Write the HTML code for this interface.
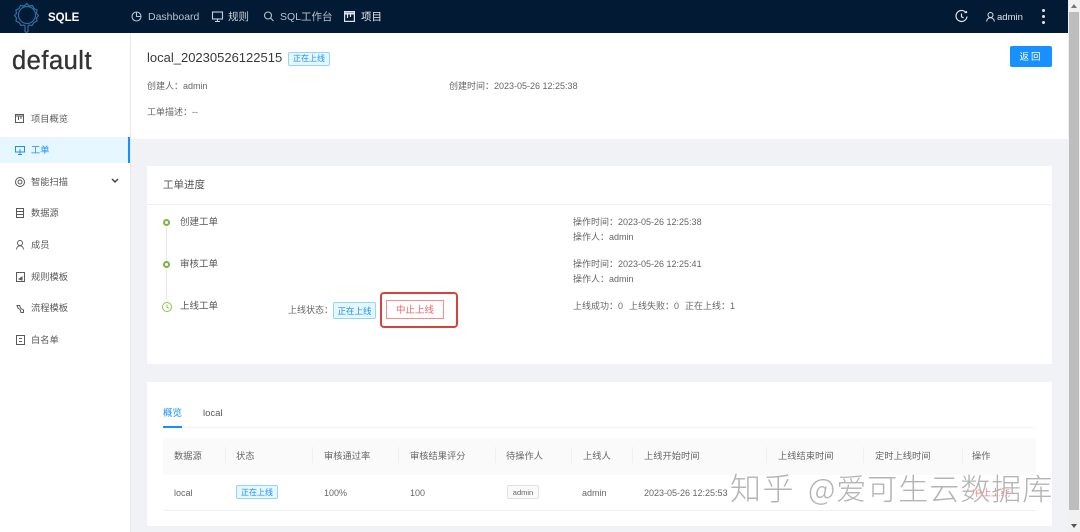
<!DOCTYPE html>
<html><head><meta charset="utf-8"><style>
*{box-sizing:border-box}
html,body{margin:0;padding:0;width:1080px;height:532px;overflow:hidden;background:#f0f2f5;font-family:"Liberation Sans","Noto Sans CJK SC",sans-serif;color:#595959}
#w{position:absolute;left:0;top:0;width:1080px;height:532px;filter:blur(.3px)}
.a{position:absolute;white-space:nowrap;line-height:1;transform:translateY(1px)}
.box{position:absolute}
.s{font-size:9.5px}
.m{font-size:9px;color:#666}
.tag{position:absolute;background:#e6f7ff;border:1px solid #91d5ff;color:#1890ff;font-size:8.5px;text-align:center;border-radius:2px}
svg{position:absolute;overflow:visible}
.th{font-size:9.25px;color:#666;top:451px}
.sep{position:absolute;width:1px;height:16px;top:447px;background:#f0f0f0}
.nav{font-size:10.5px;color:#b8c2cc;top:11px}
.side{font-size:9.25px;color:#595959;left:31px}
</style></head><body><div id="w">
<div class="box" style="left:0;top:0;width:1080px;height:33px;background:#021a33"></div>
<svg style="left:13px;top:2px" width="28" height="30" fill="none" stroke="#2f6f9f" stroke-width="1.2"><circle cx="14" cy="13" r="8.5"/><path d="M14 1.5l2 2.5 3.5-.5 1.5 3 3 1.500-.5 3.500 2 2-2 2.500.5 3-3 1.500-2 3-3-.5-1 1v5.500l-1.500 1-1.500-1v-5.500l-1-1-3 .5-2-3-3-1.500.5-3-2-2.500 2-2-.5-3.500 3-1.500 1.500-3 3.500.5z"/></svg>
<div class="a" style="left:48px;top:12px;font-size:11.5px;font-weight:bold;color:#fff">SQLE</div>
<svg style="left:131px;top:11px" width="11" height="11" fill="none" stroke="#b8c2cc" stroke-width="1.1"><circle cx="5.5" cy="5.5" r="4.5"/><path d="M5.500 1v4.500h4.500"/></svg>
<div class="a nav" style="left:148px">Dashboard</div>
<svg style="left:212px;top:11px" width="11" height="11" fill="none" stroke="#c8d0d8" stroke-width="1.1"><rect x=".5" y="1" width="10" height="7"/><path d="M3 10.500h5M5.500 8v2.500"/></svg>
<div class="a nav" style="left:228px;color:#c8d0d8">规则</div>
<svg style="left:264px;top:11px" width="10" height="11" fill="none" stroke="#b8c2cc" stroke-width="1.1"><circle cx="4" cy="4.5" r="3.5"/><path d="M6.500 7l3 3"/></svg>
<div class="a nav" style="left:280px">SQL工作台</div>
<svg style="left:344px;top:11px" width="11" height="11" fill="none" stroke="#dde3e8" stroke-width="1.2"><rect x=".6" y=".6" width="9.8" height="9.8"/><path d="M.6 2.500h9.800" stroke-width="2"/><path d="M3.500 3v4M6.500 3v3"/></svg>
<div class="a nav" style="left:361px;color:#e6eaee">项目</div>
<svg style="left:955px;top:10px" width="13" height="13" fill="none" stroke="#e0e4e8" stroke-width="1.2"><path d="M10.800 2.500A5.500 5.500 0 1 0 12 6.500"/><path d="M6.500 3.500v3.300l2 1M9.500 2.500h2v-1.500"/></svg>
<svg style="left:986px;top:12px" width="9" height="10" fill="none" stroke="#dde3e8" stroke-width="1"><circle cx="4.5" cy="3" r="2.5"/><path d="M.6 9.500c.5-5 7.300-5 7.800 0"/></svg>
<div class="a" style="left:997px;top:12px;font-size:9.5px;color:#dde3e8">admin</div>
<div class="box" style="left:1042px;top:9px;width:3px;height:3px;border-radius:50%;background:#e0e4e8"></div>
<div class="box" style="left:1042px;top:15px;width:3px;height:3px;border-radius:50%;background:#e0e4e8"></div>
<div class="box" style="left:1042px;top:21px;width:3px;height:3px;border-radius:50%;background:#e0e4e8"></div>

<div class="box" style="left:0;top:33px;width:131px;height:499px;background:#fff;border-right:1px solid #e8e8e8"></div>
<div class="a" style="left:12px;top:48px;font-size:25.5px;color:#333;letter-spacing:.5px;-webkit-text-stroke:.35px #333">default</div>
<div class="box" style="left:0;top:137px;width:130px;height:26px;background:#e6f7ff"></div>
<div class="box" style="left:128px;top:137px;width:2px;height:26px;background:#1890ff"></div>
<svg style="left:15px;top:114px" width="9" height="9" fill="none" stroke="#595959"><rect x=".5" y=".5" width="8" height="8"/><path d="M.5 2h8M3.500 2v4M6 2v3"/></svg>
<div class="a side" style="top:114px">项目概览</div>
<svg style="left:15px;top:146px" width="10" height="9" fill="none" stroke="#1890ff"><rect x=".5" y=".5" width="9" height="5.5"/><path d="M5 3v5M3 8.500h4"/></svg>
<div class="a side" style="top:145px;color:#1890ff">工单</div>
<svg style="left:15px;top:177px" width="10" height="10" fill="none" stroke="#595959"><circle cx="5" cy="5" r="4.5"/><circle cx="5" cy="5" r="2"/></svg>
<div class="a side" style="top:177px">智能扫描</div>
<svg style="left:111px;top:178px" width="8" height="6" fill="none" stroke="#444" stroke-width="1.5"><path d="M1 1l3 3 3-3"/></svg>
<svg style="left:16px;top:208px" width="8" height="10" fill="none" stroke="#595959"><rect x=".5" y=".5" width="7" height="9"/><path d="M.5 3.500h7M.5 6.500h7"/></svg>
<div class="a side" style="top:208px">数据源</div>
<svg style="left:16px;top:240px" width="8" height="10" fill="none" stroke="#595959"><circle cx="4" cy="3" r="2.5"/><path d="M.5 9.500c.3-5 6.700-5 7 0"/></svg>
<div class="a side" style="top:240px">成员</div>
<svg style="left:16px;top:272px" width="9" height="10" fill="none" stroke="#595959"><rect x=".5" y=".5" width="8" height="9"/><path d="M3 7l3-2v3z" fill="#595959"/></svg>
<div class="a side" style="top:272px">规则模板</div>
<svg style="left:16px;top:304px" width="9" height="9" fill="none" stroke="#595959"><path d="M1 1.500h2.500l1.500 3 2.500 1.500v2.500h-2.500l-1-3-2-1.500z"/></svg>
<div class="a side" style="top:303px">流程模板</div>
<svg style="left:16px;top:335px" width="9" height="10" fill="none" stroke="#595959"><rect x=".5" y=".5" width="8" height="9"/><path d="M3 3.500h3M3 6.500h3"/></svg>
<div class="a side" style="top:335px">白名单</div>

<div class="box" style="left:131px;top:33px;width:937px;height:106px;background:#fff"></div>
<div class="a" style="left:147px;top:50px;font-size:13px;color:#3a3a3a">local_20230526122515</div>
<div class="tag" style="left:288px;top:52px;width:42px;height:14px;line-height:12px;font-size:8px">正在上线</div>
<div class="a m" style="left:147px;top:81px">创建人：admin</div>
<div class="a m" style="left:449px;top:81px">创建时间：2023-05-26 12:25:38</div>
<div class="a m" style="left:147px;top:107px">工单描述：--</div>
<div class="box" style="left:1010px;top:46px;width:42px;height:21px;background:#1890ff;border-radius:2px;color:#fff;font-size:9.5px;text-align:center;line-height:23px;letter-spacing:2px">返回</div>

<div class="box" style="left:147px;top:166px;width:905px;height:198px;background:#fff"></div>
<div class="box" style="left:147px;top:204px;width:905px;height:1px;background:#f0f0f0"></div>
<div class="a" style="left:163px;top:179px;font-size:10.5px;color:#555">工单进度</div>
<div class="box" style="left:166px;top:228px;width:1px;height:72px;background:#e8e8e8"></div>
<div class="box" style="left:163px;top:219px;width:7px;height:7px;border-radius:50%;border:2px solid #7cb342;background:#fff"></div>
<div class="box" style="left:163px;top:261px;width:7px;height:7px;border-radius:50%;border:2px solid #7cb342;background:#fff"></div>
<svg style="left:162px;top:302px" width="10" height="10" fill="#fff" stroke="#8bc34a"><circle cx="5" cy="5" r="4.5"/><path d="M5 2.500v2.800l1.800 1" fill="none"/></svg>
<div class="a s" style="left:180px;top:217px">创建工单</div>
<div class="a s" style="left:180px;top:259px">审核工单</div>
<div class="a s" style="left:180px;top:301px">上线工单</div>
<div class="a m" style="left:573px;top:217px">操作时间：2023-05-26 12:25:38</div>
<div class="a m" style="left:573px;top:232px">操作人：admin</div>
<div class="a m" style="left:573px;top:259px">操作时间：2023-05-26 12:25:41</div>
<div class="a m" style="left:573px;top:274px">操作人：admin</div>
<div class="a m" style="left:573px;top:301px;word-spacing:.5px">上线成功：0&nbsp; 上线失败：0&nbsp; 正在上线：1</div>
<div class="a m" style="left:288px;top:305px">上线状态：</div>
<div class="tag" style="left:333px;top:302px;width:43px;height:17px;line-height:16px">正在上线</div>
<div class="box" style="left:380px;top:292px;width:78px;height:36px;border:2.5px solid #d9423a;border-radius:4px"></div>
<div class="box" style="left:386px;top:300px;width:58px;height:19px;border:1px solid #ff8a88;color:#f0686a;font-size:9.5px;text-align:center;line-height:20px">中止上线</div>

<div class="box" style="left:147px;top:382px;width:905px;height:144px;background:#fff"></div>
<div class="a s" style="left:163px;top:408px;color:#1890ff">概览</div>
<div class="a s" style="left:203px;top:408px">local</div>
<div class="box" style="left:163px;top:427px;width:873px;height:1px;background:#f5f5f5"></div>
<div class="box" style="left:163px;top:426px;width:19px;height:2px;background:#1890ff"></div>
<div class="box" style="left:163px;top:438px;width:873px;height:37px;background:#fafafa"></div>
<div class="box" style="left:163px;top:510px;width:873px;height:1px;background:#f0f0f0"></div>
<div class="sep" style="left:225px"></div><div class="sep" style="left:312px"></div><div class="sep" style="left:398px"></div><div class="sep" style="left:495px"></div><div class="sep" style="left:571px"></div><div class="sep" style="left:632px"></div><div class="sep" style="left:766px"></div><div class="sep" style="left:863px"></div><div class="sep" style="left:962px"></div>
<div class="a th" style="left:174px">数据源</div>
<div class="a th" style="left:236px">状态</div>
<div class="a th" style="left:324px">审核通过率</div>
<div class="a th" style="left:410px">审核结果评分</div>
<div class="a th" style="left:506px">待操作人</div>
<div class="a th" style="left:583px">上线人</div>
<div class="a th" style="left:644px">上线开始时间</div>
<div class="a th" style="left:778px">上线结束时间</div>
<div class="a th" style="left:875px">定时上线时间</div>
<div class="a th" style="left:972px">操作</div>
<div class="a m" style="left:174px;top:488px">local</div>
<div class="tag" style="left:236px;top:485px;width:42px;height:14px;line-height:13px;font-size:8px">正在上线</div>
<div class="a m" style="left:324px;top:488px">100%</div>
<div class="a m" style="left:410px;top:488px">100</div>
<div class="box" style="left:507px;top:485px;width:32px;height:14px;background:#fafafa;border:1px solid #e0e0e0;border-radius:2px;font-size:7.5px;text-align:center;line-height:13px;color:#666">admin</div>
<div class="a m" style="left:582px;top:488px">admin</div>
<div class="a m" style="left:644px;top:488px">2023-05-26 12:25:53</div>
<div class="a" style="left:972px;top:488px;font-size:9.5px;color:#ff7875">中止上线</div>
<div class="a" style="left:730px;top:470px;font-size:31px;font-weight:300;color:#b4b4b4;text-shadow:1px 1px 0 #fff;letter-spacing:1.5px;font-family:'Noto Sans CJK SC',sans-serif">知乎</div>
<div class="a" style="left:808px;top:471px;font-size:30px;font-weight:300;color:#b4b4b4;text-shadow:1px 1px 0 #fff;letter-spacing:1px;font-family:'Noto Sans CJK SC',sans-serif">@爱可生云数据库</div>

<div class="box" style="left:1068px;top:0;width:12px;height:532px;background:#f1f1f1"></div>
<div class="box" style="left:1069px;top:12px;width:10px;height:498px;background:#bdbdbd"></div>
<div class="box" style="left:1071px;top:4px;width:0;height:0;border:3px solid transparent;border-bottom:4px solid #777;border-top:0"></div>
<div class="box" style="left:1071px;top:524px;width:0;height:0;border:3px solid transparent;border-top:4px solid #555;border-bottom:0"></div>
</div></body></html>
